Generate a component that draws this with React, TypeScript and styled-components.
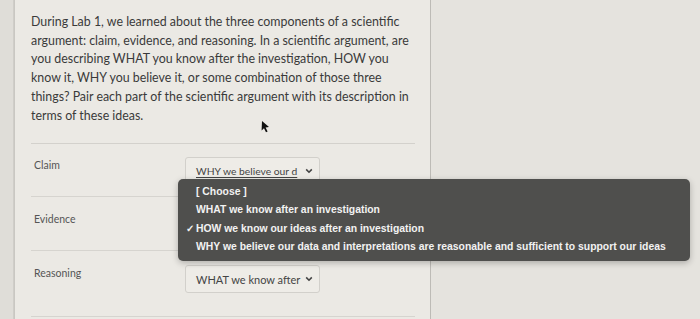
import React from "react";
import styled, { createGlobalStyle } from "styled-components";

const Global = createGlobalStyle`
  html, body {
    margin: 0;
    padding: 0;
    background: #e4e2dd;
  }
  body {
    font-family: Lato, "Open Sans", sans-serif;
  }
`;

const Page = styled.div`
  display: flex;
  width: 700px;
  height: 319px;
  overflow: hidden;
  background: #e5e3de;
`;

const LeftStrip = styled.div`
  width: 13px;
  border-right: 1px solid #cfcdc8;
  background: #dfddd8;
  flex-shrink: 0;
`;

const Panel = styled.div`
  position: relative;
  width: 417px;
  flex-shrink: 0;
  background: #ebe9e4;
  border-left: 1px solid #c9c7c2;
  border-right: 1px solid #bdbbb6;
  padding: 13px 15px 0 16px;
  box-sizing: border-box;
`;

const Question = styled.p`
  margin: 0;
  font-size: 12.4px;
  line-height: 18.7px;
  color: #3a3a3a;
  white-space: nowrap;
`;

const Table = styled.div`
  margin-top: 18px;
  border-top: 1px solid #d3d1cc;
`;

const Row = styled.div<{ $h: number }>`
  display: grid;
  grid-template-columns: 154px 1fr;
  height: ${(p) => p.$h}px;
  border-bottom: 1px solid #d6d4cf;
  box-sizing: border-box;
`;

const Label = styled.div<{ $top: number }>`
  padding: ${(p) => p.$top}px 0 0 3px;
  font-size: 10.5px;
  color: #555;
`;

const Cell = styled.div<{ $top: number }>`
  position: relative;
  padding-top: ${(p) => p.$top}px;
`;

const Select = styled.div`
  display: flex;
  align-items: center;
  justify-content: space-between;
  width: 135px;
  height: 28px;
  box-sizing: border-box;
  padding: 0 6px 0 10px;
  border: 1px solid #d2d0cb;
  border-radius: 3px;
  background: #eeece7;
  font-size: 11px;
  color: #444;
`;

const SelectText = styled.span<{ $under?: boolean }>`
  font-size: ${(p) => (p.$under ? "10.3px" : "11px")};
  text-decoration: ${(p) => (p.$under ? "underline" : "none")};
  text-underline-offset: 2px;
  white-space: nowrap;
`;

const Menu = styled.div`
  position: absolute;
  left: -7px;
  top: 35px;
  width: 512px;
  padding: 3px 0 5px;
  background: #4f4f4d;
  border-radius: 5px;
  box-shadow: 0 2px 6px rgba(0, 0, 0, 0.25);
  z-index: 2;
`;

const Item = styled.div`
  display: flex;
  align-items: center;
  height: 18.5px;
  padding-left: 18px;
  position: relative;
  font-family: "Liberation Sans", Arial, sans-serif;
  font-weight: 700;
  font-size: 10.4px;
  color: #f2f2f2;
  white-space: nowrap;
`;

const Check = styled.span`
  position: absolute;
  left: 8px;
  font-size: 10px;
`;

const Cursor = styled.svg`
  position: absolute;
  left: 244px;
  top: 120px;
`;

const Chevron = () => (
  <svg width="8" height="6" viewBox="0 0 8 6">
    <path d="M1.2 1.4 L4 4.2 L6.8 1.4" fill="none" stroke="#444" strokeWidth="1.6" />
  </svg>
);

const options = [
  "[ Choose ]",
  "WHAT we know after an investigation",
  "HOW we know our ideas after an investigation",
  "WHY we believe our data and interpretations are reasonable and sufficient to support our ideas",
];

export default function App() {
  return (
    <>
      <Global />
      <Page>
        <LeftStrip />
        <Panel>
          <Question>
            During Lab 1, we learned about the three components of a scientific
            <br />
            argument: claim, evidence, and reasoning. In a scientific argument, are
            <br />
            you describing WHAT you know after the investigation, HOW you
            <br />
            know it, WHY you believe it, or some combination of those three
            <br />
            things? Pair each part of the scientific argument with its description in
            <br />
            terms of these ideas.
          </Question>
          <Cursor width="12" height="14" viewBox="0 0 12 14">
            <path d="M3 1 L10 7 L6.6 7.4 L8.6 11.6 L7 12.3 L5 8.2 L2.6 10.4 Z" fill="#111" />
          </Cursor>
          <Table>
            <Row $h={53}>
              <Label $top={15}>Claim</Label>
              <Cell $top={13}>
                <Select>
                  <SelectText $under>WHY we believe our d</SelectText>
                  <Chevron />
                </Select>
                <Menu>
                  {options.map((o, i) => (
                    <Item key={o}>
                      {i === 2 && <Check>✓</Check>}
                      {o}
                    </Item>
                  ))}
                </Menu>
              </Cell>
            </Row>
            <Row $h={54}>
              <Label $top={16}>Evidence</Label>
              <Cell $top={13} />
            </Row>
            <Row $h={66}>
              <Label $top={16}>Reasoning</Label>
              <Cell $top={14}>
                <Select>
                  <SelectText>WHAT we know after</SelectText>
                  <Chevron />
                </Select>
              </Cell>
            </Row>
          </Table>
        </Panel>
      </Page>
    </>
  );
}
